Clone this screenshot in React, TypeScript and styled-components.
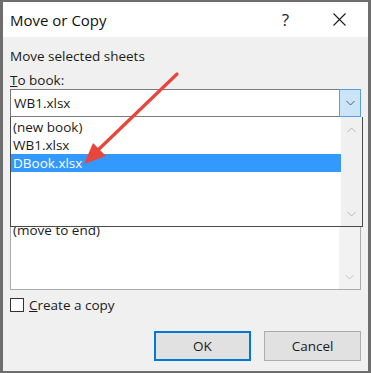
import styled, { createGlobalStyle } from 'styled-components';

const GlobalStyle = createGlobalStyle`
    html, body {
        margin: 0;
        padding: 0;
        background: #f0f0f0;
    }
    body {
        font-family: 'Open Sans', 'Noto Sans', sans-serif;
        color: #1a1a1a;
    }
`;

const books = ['(new book)', 'WB1.xlsx', 'DBook.xlsx'];

function Chevron({ up, color }: { up?: boolean; color: string }) {
    return (
        <svg width="9" height="6" viewBox="0 0 9 6">
            <path
                d={up ? 'M0.5 5 L4.5 1 L8.5 5' : 'M0.5 1 L4.5 5 L8.5 1'}
                fill="none"
                stroke={color}
                strokeWidth="1"
            />
        </svg>
    );
}

export default function App() {
    return (
        <>
            <GlobalStyle />
            <Frame>
                <TitleBar>
                    <Title>Move or Copy</Title>
                    <TitleButtons>
                        <Help>?</Help>
                        <svg width="13" height="13" viewBox="0 0 13 13">
                            <path
                                d="M0.5 0.5 L12.5 12.5 M12.5 0.5 L0.5 12.5"
                                stroke="#1a1a1a"
                                strokeWidth="1.1"
                            />
                        </svg>
                    </TitleButtons>
                </TitleBar>
                <Body>
                    <Label>Move selected sheets</Label>
                    <Label $gap={7}>
                        <u>T</u>o book:
                    </Label>
                    <ComboWrap>
                        <Combo>
                            <ComboText>WB1.xlsx</ComboText>
                            <DropButton>
                                <Chevron color="#5a5a5a" />
                            </DropButton>
                        </Combo>
                        <DropList>
                            <Items>
                                {books.map((b) => (
                                    <Item key={b} $selected={b === 'DBook.xlsx'}>
                                        {b}
                                    </Item>
                                ))}
                            </Items>
                            <ScrollBar>
                                <Chevron up color="#b8b8b8" />
                                <Chevron color="#b8b8b8" />
                            </ScrollBar>
                        </DropList>
                    </ComboWrap>
                    <ListBox>
                        <Items $offset={80}>
                            <Item>(move to end)</Item>
                        </Items>
                        <ScrollBar $light>
                            <span />
                            <Chevron color="#c4c4c4" />
                        </ScrollBar>
                    </ListBox>
                    <CheckRow>
                        <CheckBox />
                        <span>
                            <u>C</u>reate a copy
                        </span>
                    </CheckRow>
                    <Buttons>
                        <Button $default>OK</Button>
                        <Button>Cancel</Button>
                    </Buttons>
                </Body>
                <Pointer width="371" height="373" viewBox="0 0 371 373">
                    <line x1="177" y1="74" x2="97" y2="151" stroke="#e8453c" strokeWidth="3.2" strokeLinecap="round" />
                    <polygon points="84,164 93,143 106,156" fill="#e8453c" />
                </Pointer>
            </Frame>
        </>
    );
}

const Frame = styled.div`
    position: relative;
    box-sizing: border-box;
    width: 371px;
    height: 373px;
    border-style: solid;
    border-color: #6e6e6e;
    border-width: 2px 3px 2px 3px;
    display: flex;
    flex-direction: column;
    background: #f0f0f0;
    overflow: hidden;
`;

const TitleBar = styled.div`
    height: 35px;
    flex-shrink: 0;
    background: #fff;
    display: flex;
    align-items: center;
    justify-content: space-between;
    padding: 0 22px 0 7px;
`;

const Title = styled.div`
    font-size: 15px;
    color: #111;
`;

const TitleButtons = styled.div`
    display: flex;
    align-items: center;
    gap: 44px;
`;

const Help = styled.span`
    font-size: 17px;
    color: #222;
`;

const Body = styled.div`
    flex: 1;
    display: flex;
    flex-direction: column;
    padding: 11px 7px 0 7px;
`;

const Label = styled.div<{ $gap?: number }>`
    font-size: 13.5px;
    line-height: 17px;
    margin-top: ${(p) => p.$gap ?? 0}px;
    color: #1a1a1a;
`;

const ComboWrap = styled.div`
    position: relative;
    z-index: 2;
`;

const Combo = styled.div`
    box-sizing: border-box;
    width: 351px;
    height: 28px;
    border: 1px solid #7a7a7a;
    background: #fff;
    display: flex;
    align-items: stretch;
`;

const ComboText = styled.div`
    flex: 1;
    font-size: 13.5px;
    display: flex;
    align-items: center;
    padding-left: 3px;
`;

const DropButton = styled.div`
    width: 20px;
    margin: -1px -1px -1px 0;
    border: 1px solid #569de5;
    background: #cce4f7;
    display: flex;
    align-items: center;
    justify-content: center;
`;

const DropList = styled.div`
    position: absolute;
    top: 28px;
    left: 0;
    box-sizing: border-box;
    width: 353px;
    height: 110px;
    border: 1px solid #4a4a4a;
    border-top: none;
    background: #fff;
    display: flex;
`;

const Items = styled.div<{ $offset?: number }>`
    flex: 1;
    display: flex;
    flex-direction: column;
    padding-top: ${(p) => p.$offset ?? 1}px;
`;

const Item = styled.div<{ $selected?: boolean }>`
    height: 18px;
    line-height: 18px;
    font-size: 13.5px;
    padding-left: 2px;
    background: ${(p) => (p.$selected ? '#3399ff' : 'transparent')};
    color: ${(p) => (p.$selected ? '#fff' : '#1a1a1a')};
`;

const ScrollBar = styled.div<{ $light?: boolean }>`
    width: 21px;
    background: ${(p) => (p.$light ? '#f2f2f2' : '#f0f0f0')};
    display: flex;
    flex-direction: column;
    align-items: center;
    justify-content: space-between;
    padding: 10px 0 9px;
`;

const ListBox = styled.div`
    box-sizing: border-box;
    width: 351px;
    height: 150px;
    margin-top: 23px;
    border: 1px solid #ababab;
    background: #fff;
    display: flex;
`;

const CheckRow = styled.div`
    display: flex;
    align-items: center;
    gap: 5px;
    margin-top: 6px;
    font-size: 13.5px;
`;

const CheckBox = styled.div`
    box-sizing: border-box;
    width: 14px;
    height: 14px;
    border: 1px solid #333;
    background: #fff;
`;

const Buttons = styled.div`
    display: flex;
    justify-content: flex-end;
    gap: 13px;
    margin-top: 17px;
`;

const Button = styled.div<{ $default?: boolean }>`
    box-sizing: border-box;
    width: 97px;
    height: 30px;
    background: #e1e1e1;
    border: ${(p) => (p.$default ? '2px solid #0078d7' : '1px solid #adadad')};
    display: flex;
    align-items: center;
    justify-content: center;
    font-size: 13.5px;
    color: #1a1a1a;
`;

const Pointer = styled.svg`
    position: absolute;
    top: -2px;
    left: -3px;
    z-index: 5;
    pointer-events: none;
`;
